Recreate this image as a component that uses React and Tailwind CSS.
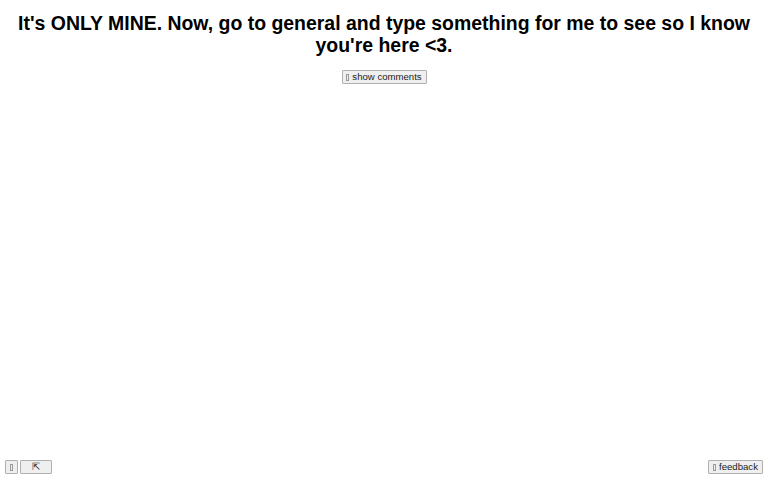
const btn =
  "bg-[#efefef] border border-[#b0b0b0] rounded-[1px] text-[9.6px] leading-[12px] text-[#222]";

// the icon font never loaded in the reference, so its glyphs show as narrow empty boxes
const Tofu = () => (
  <span className="inline-block w-[3px] h-[7px] border border-[#999] border-[0.5px] align-[-0.5px]" />
);

export default function App() {
  return (
    <div className="h-screen flex flex-col justify-between bg-white text-black font-['Liberation_Sans',Arial,sans-serif]">
      <div className="flex flex-col items-center pt-3">
        <h1 className="text-[19.45px] leading-[22px] font-bold text-center px-2">
          It's ONLY MINE. Now, go to general and type something for me to see so I know you're here &lt;3.
        </h1>
        <button className={`${btn} mt-[14px] h-[14px] w-[85px] flex items-center justify-center gap-[3px]`}>
          <Tofu />
          show comments
        </button>
      </div>
      <div className="flex items-center justify-between px-[5px] pb-[6px]">
        <div className="flex items-center gap-[2px]">
          <button className={`${btn} w-[13px] h-[14px] flex items-center justify-center`}>
            <Tofu />
          </button>
          <button className={`${btn} w-[32px] h-[14px] flex items-center justify-center`}>⇱</button>
        </div>
        <button className={`${btn} w-[55px] h-[14px] flex items-center justify-center gap-[3px]`}>
          <Tofu />
          feedback
        </button>
      </div>
    </div>
  );
}
